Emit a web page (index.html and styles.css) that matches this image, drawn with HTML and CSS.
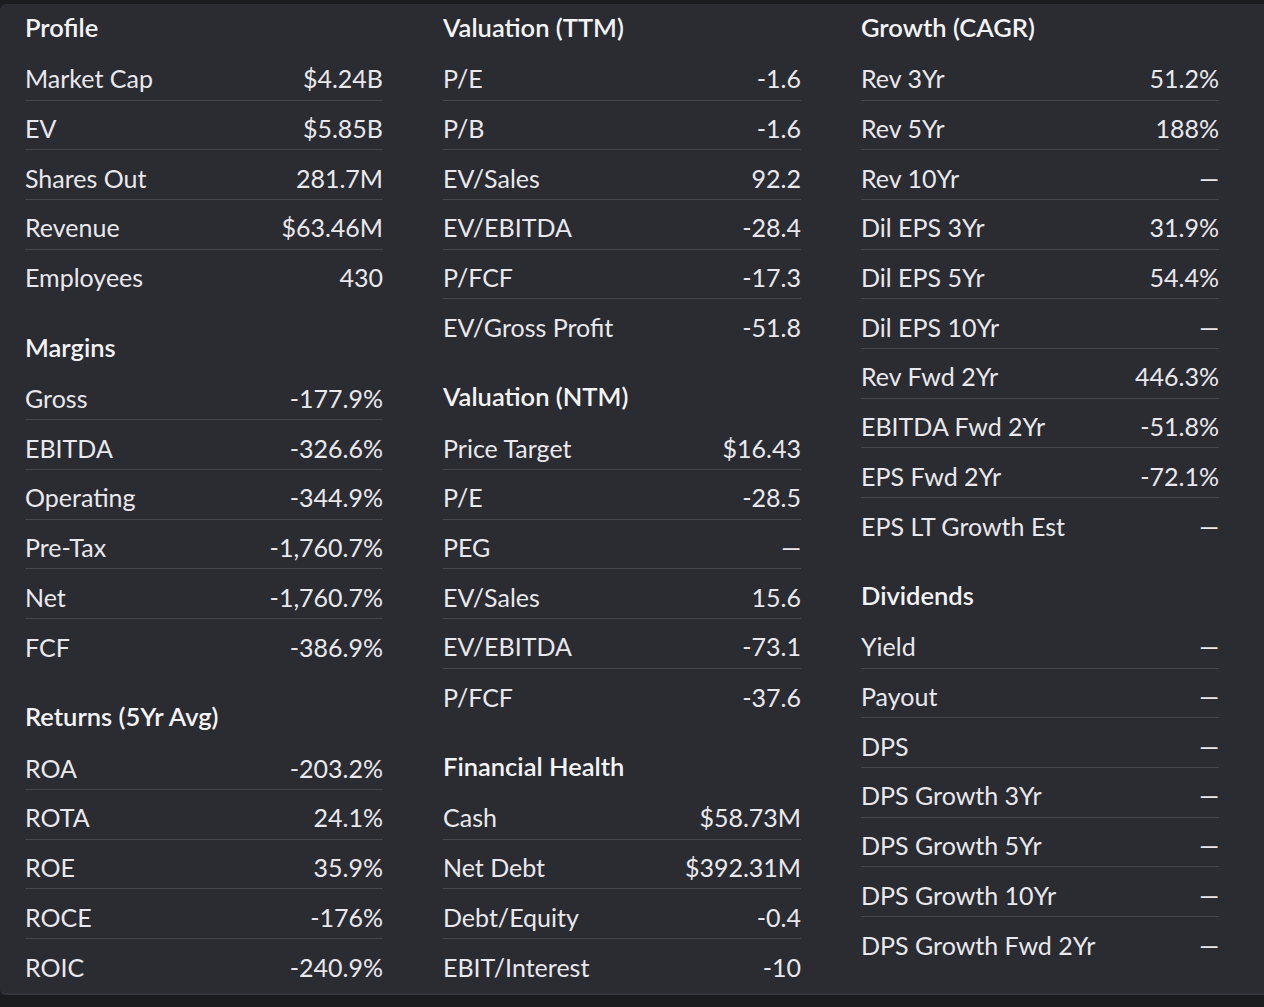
FILE: index.html
```html
<!DOCTYPE html>
<html>
<head>
<meta charset="utf-8">
<link rel="stylesheet" href="styles.css">
</head>
<body>
<div class="panel">
  <div class="col">
    <section class="sec">
      <h2 class="title">Profile</h2>
      <div class="row"><span>Market Cap</span><span>$4.24B</span></div>
      <div class="row"><span>EV</span><span>$5.85B</span></div>
      <div class="row"><span>Shares Out</span><span>281.7M</span></div>
      <div class="row"><span>Revenue</span><span>$63.46M</span></div>
      <div class="row"><span>Employees</span><span>430</span></div>
    </section>
    <section class="sec">
      <h2 class="title">Margins</h2>
      <div class="row"><span>Gross</span><span>-177.9%</span></div>
      <div class="row"><span>EBITDA</span><span>-326.6%</span></div>
      <div class="row"><span>Operating</span><span>-344.9%</span></div>
      <div class="row"><span>Pre-Tax</span><span>-1,760.7%</span></div>
      <div class="row"><span>Net</span><span>-1,760.7%</span></div>
      <div class="row"><span>FCF</span><span>-386.9%</span></div>
    </section>
    <section class="sec">
      <h2 class="title">Returns (5Yr Avg)</h2>
      <div class="row"><span>ROA</span><span>-203.2%</span></div>
      <div class="row"><span>ROTA</span><span>24.1%</span></div>
      <div class="row"><span>ROE</span><span>35.9%</span></div>
      <div class="row"><span>ROCE</span><span>-176%</span></div>
      <div class="row"><span>ROIC</span><span>-240.9%</span></div>
    </section>
  </div>
  <div class="col">
    <section class="sec">
      <h2 class="title">Valuation (TTM)</h2>
      <div class="row"><span>P/E</span><span>-1.6</span></div>
      <div class="row"><span>P/B</span><span>-1.6</span></div>
      <div class="row"><span>EV/Sales</span><span>92.2</span></div>
      <div class="row"><span>EV/EBITDA</span><span>-28.4</span></div>
      <div class="row"><span>P/FCF</span><span>-17.3</span></div>
      <div class="row"><span>EV/Gross Profit</span><span>-51.8</span></div>
    </section>
    <section class="sec">
      <h2 class="title">Valuation (NTM)</h2>
      <div class="row"><span>Price Target</span><span>$16.43</span></div>
      <div class="row"><span>P/E</span><span>-28.5</span></div>
      <div class="row"><span>PEG</span><span>—</span></div>
      <div class="row"><span>EV/Sales</span><span>15.6</span></div>
      <div class="row"><span>EV/EBITDA</span><span>-73.1</span></div>
      <div class="row"><span>P/FCF</span><span>-37.6</span></div>
    </section>
    <section class="sec">
      <h2 class="title">Financial Health</h2>
      <div class="row"><span>Cash</span><span>$58.73M</span></div>
      <div class="row"><span>Net Debt</span><span>$392.31M</span></div>
      <div class="row"><span>Debt/Equity</span><span>-0.4</span></div>
      <div class="row"><span>EBIT/Interest</span><span>-10</span></div>
    </section>
  </div>
  <div class="col">
    <section class="sec">
      <h2 class="title">Growth (CAGR)</h2>
      <div class="row"><span>Rev 3Yr</span><span>51.2%</span></div>
      <div class="row"><span>Rev 5Yr</span><span>188%</span></div>
      <div class="row"><span>Rev 10Yr</span><span>—</span></div>
      <div class="row"><span>Dil EPS 3Yr</span><span>31.9%</span></div>
      <div class="row"><span>Dil EPS 5Yr</span><span>54.4%</span></div>
      <div class="row"><span>Dil EPS 10Yr</span><span>—</span></div>
      <div class="row"><span>Rev Fwd 2Yr</span><span>446.3%</span></div>
      <div class="row"><span>EBITDA Fwd 2Yr</span><span>-51.8%</span></div>
      <div class="row"><span>EPS Fwd 2Yr</span><span>-72.1%</span></div>
      <div class="row"><span>EPS LT Growth Est</span><span>—</span></div>
    </section>
    <section class="sec">
      <h2 class="title">Dividends</h2>
      <div class="row"><span>Yield</span><span>—</span></div>
      <div class="row"><span>Payout</span><span>—</span></div>
      <div class="row"><span>DPS</span><span>—</span></div>
      <div class="row"><span>DPS Growth 3Yr</span><span>—</span></div>
      <div class="row"><span>DPS Growth 5Yr</span><span>—</span></div>
      <div class="row"><span>DPS Growth 10Yr</span><span>—</span></div>
      <div class="row"><span>DPS Growth Fwd 2Yr</span><span>—</span></div>
    </section>
  </div>
</div>
</body>
</html>
```

FILE: styles.css
```css
html, body {
  margin: 0;
  padding: 0;
  background: #1b1c1e;
}
body {
  font-family: "Lato", "Liberation Sans", sans-serif;
  color: #e9e9ed;
  padding-top: 4px;
  height: 1007px;
  box-sizing: border-box;
}
.panel {
  background: #2b2b32;
  border-radius: 6px 0 0 6px;
  height: 991px;
  box-sizing: border-box;
  padding: 0 46px 0 25px;
  display: grid;
  grid-template-columns: repeat(3, 358px);
  column-gap: 60px;
  align-items: start;
  border-bottom: 2px solid #34353a;
}
.col {
  display: flex;
  flex-direction: column;
  gap: 24.5px;
}
.title {
  margin: 0;
  height: 47px;
  line-height: 47px;
  font-size: 25.5px;
  font-weight: 600;
  color: #f4f4f6;
}
.row {
  height: 49.67px;
  box-sizing: border-box;
  display: flex;
  justify-content: space-between;
  align-items: center;
  font-size: 25px;
  padding-top: 7px;
  padding-bottom: 1px;
  border-bottom: 1px solid #46464d;
}
.row:last-child {
  border-bottom: none;
}
```
